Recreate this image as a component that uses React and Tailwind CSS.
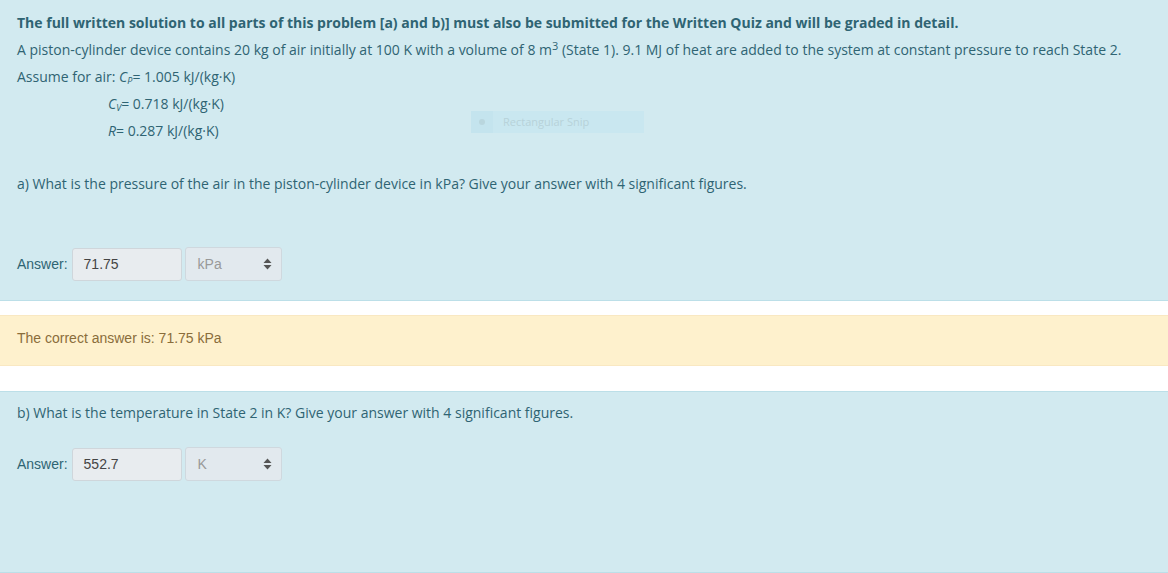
import React from 'react';

const openSans = { fontFamily: '"Open Sans", "Liberation Sans", sans-serif' };
const arial = { fontFamily: '"Liberation Sans", Arial, sans-serif' };

const Caret = () => (
  <svg width="9" height="12" viewBox="0 0 9 12" className="text-[#555]">
    <path d="M4.5 0.5 L8.5 5 L0.5 5 Z" fill="currentColor" />
    <path d="M0.5 7 L8.5 7 L4.5 11.5 Z" fill="currentColor" />
  </svg>
);

const AnswerRow = ({ value, unit }) => (
  <div className="flex items-center text-[14px] text-[#2f6473]" style={arial}>
    <span className="ml-[17px] mr-[4px]">Answer:</span>
    <div className="w-[110px] h-[33px] rounded-[3px] border border-[#cfd6db] bg-[#e8ecef] flex items-center pl-[11px] text-[#444]">
      {value}
    </div>
    <div className="ml-[3px] w-[97px] h-[34px] rounded-[3px] border border-[#cfd8de] bg-[#e2e9ee] flex items-center justify-between pl-[12px] pr-[9px] text-[#999]">
      <span>{unit}</span>
      <Caret />
    </div>
  </div>
);

export default function App() {
  return (
    <div className="w-[1168px] h-[573px] bg-white overflow-hidden">
      {/* question a */}
      <div className="relative h-[301px] bg-[#d2eaf0] border-b border-[#bcdfe8] text-[#2f6473] text-[14px]" style={openSans}>
        <div className="px-[17px] pt-[9px] leading-[27px]">
          <p className="font-bold">
            The full written solution to all parts of this problem [a) and b)] must also be submitted for the Written Quiz and will be graded in detail.
          </p>
          <p>
            A piston-cylinder device contains 20 kg of air initially at 100 K with a volume of 8 m<sup className="text-[11px]">3</sup> (State 1). 9.1 MJ of heat are added to the system at constant pressure to reach State 2.
          </p>
          <p>
            Assume for air: <i>C<sub className="text-[9px]">P</sub></i>= 1.005 kJ/(kg·K)
          </p>
          <p className="pl-[91px]">
            <i>C<sub className="text-[9px]">V</sub></i>= 0.718 kJ/(kg·K)
          </p>
          <p className="pl-[91px]">
            <i>R</i>= 0.287 kJ/(kg·K)
          </p>
          <p className="mt-[26px]">
            a) What is the pressure of the air in the piston-cylinder device in kPa? Give your answer with 4 significant figures.
          </p>
        </div>
        <div className="mt-[50px]">
          <AnswerRow value="71.75" unit="kPa" />
        </div>

        {/* faint snip overlay */}
        <div className="absolute left-[471px] top-[111px] w-[173px] h-[22px] flex items-center bg-[#c9e7f0] text-[11px] text-[#b7d2d9]" style={openSans}>
          <div className="w-[22px] h-[22px] bg-[#c4e4ee] flex items-center justify-center">
            <span className="w-[6px] h-[6px] rounded-full bg-[#b9d6de]" />
          </div>
          <span className="ml-[10px]">Rectangular Snip</span>
        </div>
      </div>

      <div className="h-[14px]" />

      {/* feedback */}
      <div className="h-[51px] bg-[#fef1cd] border-y border-[#f9e8c2] flex items-center pl-[17px] pb-[4px] text-[14px] text-[#8a6d3b]" style={arial}>
        The correct answer is: 71.75 kPa
      </div>

      <div className="h-[25px]" />

      {/* question b */}
      <div className="h-[182px] bg-[#d2eaf0] border-t border-[#bcdfe8] border-b text-[#2f6473] text-[14px]" style={openSans}>
        <p className="px-[17px] pt-[7px] leading-[27px]">
          b) What is the temperature in State 2 in K? Give your answer with 4 significant figures.
        </p>
        <div className="mt-[21px]">
          <AnswerRow value="552.7" unit="K" />
        </div>
      </div>
    </div>
  );
}
